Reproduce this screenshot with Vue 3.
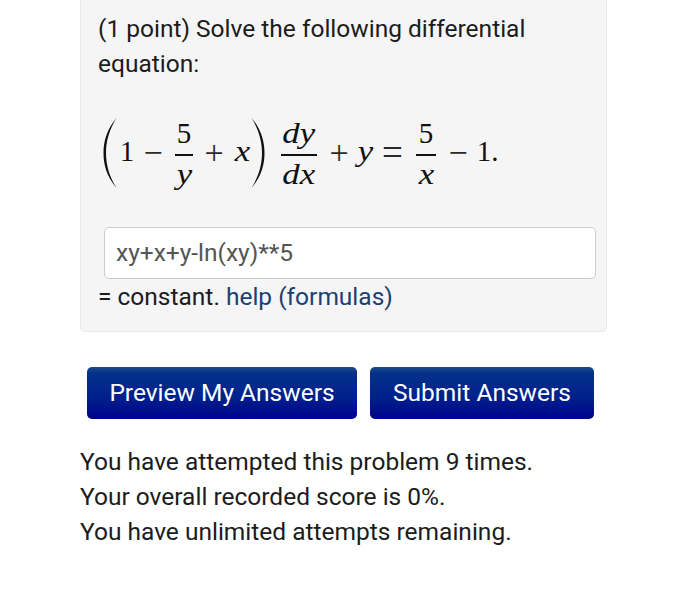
<script setup>
const stats = [
  'You have attempted this problem 9 times.',
  'Your overall recorded score is 0%.',
  'You have unlimited attempts remaining.'
]
</script>

<template>
  <main class="page">
    <section class="panel">
      <p class="prompt">(1 point) Solve the following differential equation:</p>
      <div class="math">
        <svg class="paren left" viewBox="0 0 16 72" width="16" height="72" aria-hidden="true">
          <path d="M14.5 1 C5 12 1.5 24 1.5 36 C1.5 48 5 60 14.5 71 C7.5 60 4 48 4 36 C4 24 7.5 12 14.5 1 Z" />
        </svg>
        <span class="sym one">1</span>
        <span class="sym op m1">−</span>
        <span class="frac f1"><span class="num">5</span><span class="den"><i>y</i></span></span>
        <span class="sym op m2">+</span>
        <span class="sym vx"><i>x</i></span>
        <svg class="paren right" viewBox="0 0 16 72" width="16" height="72" aria-hidden="true">
          <path d="M1.5 1 C11 12 14.5 24 14.5 36 C14.5 48 11 60 1.5 71 C8.5 60 12 48 12 36 C12 24 8.5 12 1.5 1 Z" />
        </svg>
        <span class="frac f2"><span class="num"><i>dy</i></span><span class="den"><i>dx</i></span></span>
        <span class="sym op m3">+</span>
        <span class="sym vy"><i>y</i></span>
        <span class="sym op m4">=</span>
        <span class="frac f3"><span class="num">5</span><span class="den"><i>x</i></span></span>
        <span class="sym op m5">−</span>
        <span class="sym m6">1.</span>
      </div>
      <div class="answer">xy+x+y-ln(xy)**5</div>
      <p class="constant">= constant. <a class="help">help (formulas)</a></p>
    </section>
    <div class="actions">
      <button class="btn preview" type="button">Preview My Answers</button>
      <button class="btn submit" type="button">Submit Answers</button>
    </div>
    <div class="stats">
      <p v-for="line in stats" :key="line">{{ line }}</p>
    </div>
  </main>
</template>

<style scoped>
.page {
  width: 682px;
  height: 594px;
  padding-left: 80px;
  box-sizing: border-box;
  overflow: hidden;
  font-family: Roboto, "Liberation Sans", sans-serif;
  font-size: 24.5px;
  line-height: 35px;
  color: #1c1c1c;
  background: #fff;
}
.panel {
  width: 527px;
  height: 332px;
  box-sizing: border-box;
  padding: 11px 17px 0;
  background: #f5f5f5;
  border: 1px solid #e8e8e8;
  border-top: none;
  border-radius: 0 0 5px 5px;
}
p { margin: 0; }
.prompt { width: 450px; }
.math {
  height: 96px;
  margin: 24px 0 0 4px;
  display: flex;
  align-items: center;
  font-family: "Liberation Serif", serif;
  font-size: 29px;
  line-height: 32px;
  color: #111;
}
.math i {
  display: inline-block;
  font-style: italic;
  transform: scaleX(1.2);
}
.paren { fill: #111; flex: none; }
.sym {
  display: flex;
  justify-content: center;
  flex: none;
  padding-bottom: 4px;
  white-space: nowrap;
}
.op {
  font-size: 34px;
  color: #2a2a2a;
  padding-bottom: 0;
}
.frac {
  display: flex;
  flex-direction: column;
  align-items: center;
  flex: none;
}
.num { padding-bottom: 5px; }
.den { border-top: 2px solid #111; width: 100%; text-align: center; padding-top: 2px; }
.one { width: 12px; margin-left: 3px; }
.m1 { width: 18px; margin-left: 11px; }
.f1 { width: 18px; margin-left: 13px; }
.m2 { width: 18px; margin-left: 12px; }
.vx { width: 16px; margin-left: 11px; }
.f2 { width: 36px; margin-left: 15px; }
.m3 { width: 18px; margin-left: 13px; }
.vy { width: 14px; margin-left: 10px; }
.m4 { width: 21px; margin-left: 10px; font-size: 37px; }
.f3 { width: 20px; margin-left: 13px; }
.m5 { width: 20px; margin-left: 12px; }
.m6 { width: 19px; margin-left: 10px; }
.answer {
  width: 492px;
  height: 52px;
  box-sizing: border-box;
  margin: 26px 0 0 6px;
  padding-left: 11px;
  background: #fff;
  border: 1px solid #ccc;
  border-radius: 5px;
  line-height: 50px;
  color: #555;
}
.help { color: #1c3f70; }
.actions {
  display: flex;
  gap: 13px;
  margin: 35px 0 0 7px;
}
.btn {
  height: 52px;
  border: none;
  border-radius: 5px;
  padding: 0 0 2px;
  font: inherit;
  color: #fff;
  background: linear-gradient(#1f4a8c, #04318a 12%, #00208c 60%, #00008b);
}
.preview { width: 270px; }
.submit { width: 224px; }
.stats { margin-top: 25px; }
</style>
